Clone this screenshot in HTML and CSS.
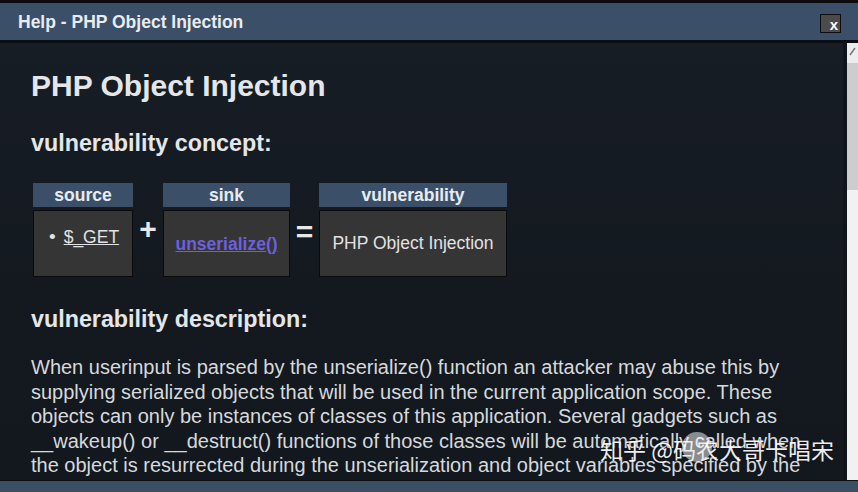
FILE: index.html
```html
<!DOCTYPE html>
<html lang="en">
<head>
<meta charset="utf-8">
<title>Help - PHP Object Injection</title>
<link rel="stylesheet" href="styles.css">
</head>
<body>
<div class="window">
  <div class="topline"></div>
  <div class="titlebar">
    <span class="title">Help - PHP Object Injection</span>
    <span class="close">x</span>
  </div>
  <div class="sep"></div>
  <div class="main">
    <div class="content">
      <h1>PHP Object Injection</h1>
      <h2>vulnerability concept:</h2>
      <div class="concept">
        <div class="col col-source">
          <div class="col-head">source</div>
          <div class="col-body body-list"><span class="bullet">•</span><a class="plain">$_GET</a></div>
        </div>
        <div class="op op-plus">+</div>
        <div class="col col-sink">
          <div class="col-head">sink</div>
          <div class="col-body"><a class="link">unserialize()</a></div>
        </div>
        <div class="op op-eq">=</div>
        <div class="col col-vuln">
          <div class="col-head">vulnerability</div>
          <div class="col-body">PHP Object Injection</div>
        </div>
      </div>
      <h2 class="h2-desc">vulnerability description:</h2>
      <p class="desc">When userinput is parsed by the unserialize() function an attacker may abuse this by supplying serialized objects that will be used in the current application scope. These objects can only be instances of classes of this application. Several gadgets such as __wakeup() or __destruct() functions of those classes will be automatically called when the object is resurrected during the unserialization and object variables specified by the attacker can be used to trigger further vulnerabilities in these methods.</p>
      <div class="watermark"><span class="wm-avatar"></span>知乎 @码农大哥卡唱宋</div>
    </div>
    <div class="scrollbar">
      <div class="sb-arrow"><svg width="11" height="20" viewBox="0 0 11 20"><path d="M3 12 L8 5" stroke="#777" stroke-width="1.5" fill="none"/></svg></div>
      <div class="sb-thumb"></div>
      <div class="sb-track"></div>
    </div>
  </div>
  <div class="bottomsep"></div>
  <div class="bottombar"></div>
</div>
</body>
</html>
```

FILE: styles.css
```css
html, body {
  margin: 0;
  padding: 0;
  background: #151b22;
}
body {
  font-family: "Liberation Sans", Arial, sans-serif;
  width: 858px;
  height: 492px;
  overflow: hidden;
}
.window {
  display: flex;
  flex-direction: column;
  height: 492px;
}
.topline {
  height: 3px;
  background: #0a0c0e;
}
.titlebar {
  height: 37px;
  background: #3b5068;
  display: flex;
  align-items: center;
  justify-content: space-between;
  padding: 0 17px 0 18px;
}
.title {
  color: #e8ecf0;
  font-weight: bold;
  font-size: 17.5px;
  margin-top: 1px;
}
.close {
  width: 21px;
  height: 19px;
  box-sizing: border-box;
  background: #4b4b4b;
  border: 1px solid #0e0e0e;
  color: #fff;
  font-weight: bold;
  font-size: 15px;
  line-height: 14px;
  display: flex;
  align-items: flex-end;
  justify-content: flex-end;
  padding: 0 2px 0 0;
  margin-top: 4px;
}
.sep {
  height: 3px;
  background: #0b0e12;
}
.main {
  flex: 1;
  display: flex;
  min-height: 0;
}
.content {
  flex: 1;
  position: relative;
  overflow: hidden;
  background: linear-gradient(#171d25, #141920 60%, #13181f);
  border-right: 4px solid #10151b;
  padding: 25px 0 0 31px;
}
h1 {
  margin: 0;
  font-size: 30px;
  line-height: 36px;
  color: #e4e6e8;
  font-weight: bold;
}
h2 {
  margin: 25px 0 0;
  font-size: 23.3px;
  line-height: 28px;
  color: #e4e6e8;
  font-weight: bold;
}
.h2-desc {
  margin-top: 28px;
}
.concept {
  display: flex;
  margin-top: 26px;
  margin-left: 2px;
}
.col {
  display: flex;
  flex-direction: column;
  gap: 3px;
}
.col-source { width: 100px; }
.col-sink { width: 127px; }
.col-vuln { width: 188px; }
.col-head {
  height: 24px;
  background: #3b5068;
  color: #e8ecf0;
  font-weight: bold;
  font-size: 17.5px;
  line-height: 24px;
  text-align: center;
}
.col-body {
  height: 67px;
  box-sizing: border-box;
  background: #353535;
  border: 1px solid #0a0a0a;
  color: #e2e2e2;
  font-size: 17.5px;
  display: flex;
  align-items: center;
  justify-content: center;
}
.body-list {
  align-items: flex-start;
  justify-content: flex-start;
  padding: 15px 0 0 15px;
}
.bullet {
  font-size: 19px;
  margin-right: 8px;
  line-height: 22px;
}
.plain {
  color: #e2e2e2;
  text-decoration: underline;
  line-height: 22px;
}
.link {
  color: #6c60de;
  font-weight: bold;
  text-decoration: underline;
  margin-top: 2px;
}
.op {
  width: 30px;
  color: #e8e8e8;
  font-weight: bold;
  text-align: center;
  font-size: 30px;
}
.op-plus {
  margin-top: 31px;
  line-height: 30px;
}
.op-eq {
  width: 29px;
  margin-top: 34px;
  line-height: 30px;
}
.desc {
  margin: 22px 0 0;
  width: 776px;
  font-size: 20px;
  line-height: 24.5px;
  color: #d6d9dc;
}
.watermark {
  position: absolute;
  left: 600px;
  top: 391px;
  color: #ffffff;
  font-family: "Noto Sans CJK SC", sans-serif;
  font-size: 23px;
  line-height: 30px;
  white-space: nowrap;
  opacity: 0.92;
  text-shadow: 0 0 2px rgba(0,0,0,0.5);
}
.wm-avatar {
  position: absolute;
  left: 82px;
  top: -2px;
  width: 30px;
  height: 30px;
  border-radius: 50%;
  background: rgba(255,255,255,0.55);
}
.scrollbar {
  width: 11px;
  display: flex;
  flex-direction: column;
  background: #f0f0f0;
}
.sb-arrow {
  height: 20px;
  background: #ececec;
}
.sb-thumb {
  height: 127px;
  background: #cdcdcd;
}
.sb-track {
  flex: 1;
  background: #f1f1f1;
}
.bottomsep {
  height: 1px;
  background: #0b0e12;
}
.bottombar {
  height: 11px;
  background: #3a4e64;
}
```
